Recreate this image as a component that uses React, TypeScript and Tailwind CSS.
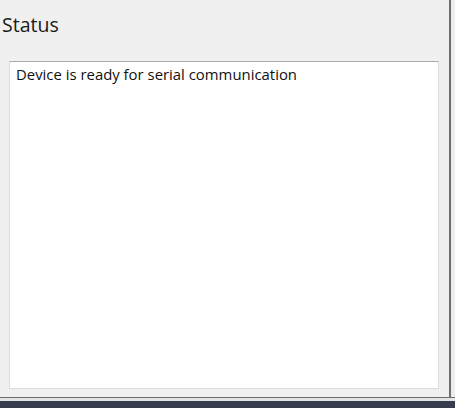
export default function App() {
  return (
    <div className="w-[455px] h-[408px] flex flex-col bg-[#f0f0f0] overflow-hidden" style={{ fontFamily: '"Open Sans", "Segoe UI", sans-serif' }}>
      <div className="flex flex-1 min-h-0">
        {/* panel */}
        <div className="w-[449px] flex flex-col">
          <div className="h-[61px] pl-[2px] pt-[12px] text-[19.5px] leading-[26px] text-[#1a1a1a]">Status</div>
          <div className="ml-[9px] w-[430px] h-[328px] bg-white border border-[#dcdcdc] border-t-[#ababab] px-[6px] pt-[2px]">
            <p className="text-[14.9px] leading-[20px] text-[#111]">Device is ready for serial communication</p>
          </div>
        </div>
        <div className="w-[2px] bg-[#6d6d6d]" />
        <div className="flex-1 bg-[#ececec]" />
      </div>
      <div className="h-[1px] bg-[#6d6d6d]" />
      <div className="h-[3px] bg-[#e4e4e4]" />
      <div className="h-[7px] bg-[#363c4d]" />
    </div>
  );
}
